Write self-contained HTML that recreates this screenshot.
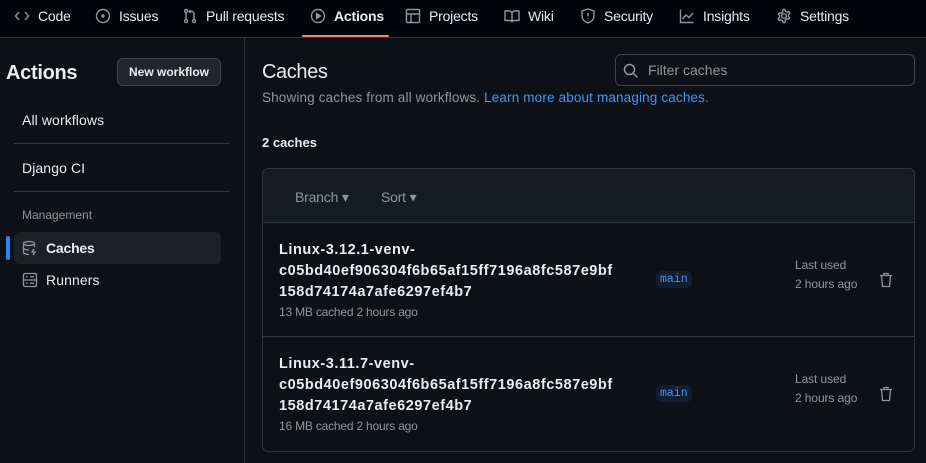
<!DOCTYPE html>
<html><head><style>
*{box-sizing:border-box;margin:0;padding:0}
body{width:926px;height:463px;overflow:hidden;background:#0d1117;color:#e6edf3;font-family:"Liberation Sans",sans-serif;font-size:14px;position:relative}
.nav{position:absolute;left:0;top:0;width:926px;height:38px;background:#010409;border-bottom:1px solid #30363d}
.nav .it{position:absolute;top:6px;height:20px;display:flex;align-items:center;gap:8px;font-size:14px;color:#e6edf3;letter-spacing:-0.2px}
.nav svg{width:16px;height:16px;fill:none;stroke:#8d96a0;stroke-width:1.4}
.ul{position:absolute;left:302px;top:35px;width:87px;height:2px;background:#f78166;border-radius:2px}
.side{position:absolute;left:0;top:38px;width:245px;height:425px;border-right:1px solid #30363d}
.abs{position:absolute}
.btn{left:117px;top:58px;width:104px;height:28px;border:1px solid #3d444d;background:#21262d;border-radius:6px;font-size:12px;font-weight:bold;color:#e6edf3;display:flex;align-items:center;justify-content:center}
.sep{height:1px;background:#30363d}
.muted{color:#8d96a0}
.box{left:262px;top:168px;width:653px;height:284px;border:1px solid #30363d;border-radius:6px;overflow:hidden}
.bh{height:54px;background:#161b22;border-bottom:1px solid #30363d;position:relative}
.row{position:relative;height:114px;border-bottom:1px solid #30363d}
.t{position:absolute;left:16px;top:17px;font-weight:bold;font-size:14.5px;line-height:21px;letter-spacing:0.55px}
.s{position:absolute;left:16px;top:82px;font-size:12px;color:#8d96a0;letter-spacing:-0.2px}
.br{position:absolute;left:393px;top:48px;background:#121d2f;color:#4493f8;font-family:"Liberation Mono",monospace;font-size:11.5px;padding:2px 4px;border-radius:6px}
.lu{position:absolute;left:532px;top:33px;font-size:12px;color:#8d96a0;line-height:19px;letter-spacing:-0.1px}
.tr{position:absolute;left:616px;top:49px}
</style></head><body>
<div class="nav">
<div class="it" style="left:14px"><svg viewBox="0 0 16 16"><path d="M5 4L1.5 8 5 12M11 4l3.5 4L11 12"/></svg>Code</div>
<div class="it" style="left:95px"><svg viewBox="0 0 16 16"><circle cx="8" cy="8" r="6.5"/><circle cx="8" cy="8" r="1" fill="#8d96a0"/></svg>Issues</div>
<div class="it" style="left:182px"><svg viewBox="0 0 16 16"><circle cx="4" cy="3" r="1.5"/><circle cx="4" cy="13" r="1.5"/><circle cx="12" cy="13" r="1.5"/><path d="M4 4.5v7M12 11.5V5.5a2 2 0 0 0-2-2H7M8.5 2L7 3.5 8.5 5"/></svg>Pull requests</div>
<div class="it" style="left:310px;font-weight:bold"><svg viewBox="0 0 16 16"><circle cx="8" cy="8" r="6.5"/><path d="M6.5 5.5v5l4-2.5z" fill="#8d96a0"/></svg>Actions</div>
<div class="it" style="left:405px"><svg viewBox="0 0 16 16"><rect x="1.5" y="1.5" width="13" height="13" rx="1"/><path d="M1.5 6h13M6 6v8.5"/></svg>Projects</div>
<div class="it" style="left:504px"><svg viewBox="0 0 16 16"><path d="M1 3h4.5A2.5 2.5 0 0 1 8 5.5V14a2 2 0 0 0-2-1.5H1zM15 3h-4.5A2.5 2.5 0 0 0 8 5.5V14a2 2 0 0 1 2-1.5h5z"/></svg>Wiki</div>
<div class="it" style="left:580px"><svg viewBox="0 0 16 16"><path d="M8 1l6 2v5c0 3.5-3 6-6 7-3-1-6-3.5-6-7V3z"/><path d="M8 5v3.5M8 10.5v.5"/></svg>Security</div>
<div class="it" style="left:679px"><svg viewBox="0 0 16 16"><path d="M1.5 1.5v13h13M3.5 11l3.5-4 3 2.5L14 5"/></svg>Insights</div>
<div class="it" style="left:776px"><svg viewBox="0 0 16 16"><circle cx="8" cy="8" r="2.3"/><path d="M7 1.5h2l.4 1.8 1.6.9 1.7-.6 1 1.7-1.3 1.3v1.8l1.3 1.3-1 1.7-1.7-.6-1.6.9L9 14.5H7l-.4-1.8-1.6-.9-1.7.6-1-1.7L3.6 9.4V7.6L2.3 6.3l1-1.7 1.7.6 1.6-.9z"/></svg>Settings</div>
<div class="ul"></div>
</div>
<div class="side"></div>
<div class="abs" style="left:6px;top:62px;font-size:20px;font-weight:bold;letter-spacing:-0.3px">Actions</div>
<div class="abs btn">New workflow</div>
<div class="abs" style="left:22px;top:112px;letter-spacing:0.1px">All workflows</div>
<div class="abs sep" style="left:14px;top:143px;width:215px"></div>
<div class="abs" style="left:22px;top:160px;letter-spacing:0.1px">Django CI</div>
<div class="abs sep" style="left:14px;top:191px;width:215px"></div>
<div class="abs muted" style="left:22px;top:208px;font-size:12px">Management</div>
<div class="abs" style="left:14px;top:232px;width:207px;height:32px;background:#1c2128;border-radius:6px"></div>
<div class="abs" style="left:6px;top:236px;width:4px;height:24px;background:#2f81f7;border-radius:2px"></div>
<svg class="abs" style="left:22px;top:240px" width="16" height="16" viewBox="0 0 16 16" fill="none" stroke="#8d96a0" stroke-width="1.3"><ellipse cx="7" cy="3.5" rx="5.5" ry="2"/><path d="M1.5 3.5v9c0 1.1 2.5 2 5.5 2M12.5 3.5V7M1.5 8c0 1.1 2.5 2 5.5 2"/><path d="M12 9l-2 3h3l-2 3" /></svg>
<div class="abs" style="left:46px;top:240px;font-weight:bold;letter-spacing:-0.2px">Caches</div>
<svg class="abs" style="left:22px;top:272px" width="16" height="16" viewBox="0 0 16 16" fill="none" stroke="#8d96a0" stroke-width="1.3"><rect x="1.5" y="1.5" width="13" height="13" rx="1.5"/><path d="M1.5 8h13M4 4.7h1.5M4 11.2h1.5M8 4.7h4M8 11.2h4"/></svg>
<div class="abs" style="left:46px;top:272px;letter-spacing:0.1px">Runners</div>

<div class="abs" style="left:262px;top:61px;font-size:20px;letter-spacing:-0.4px">Caches</div>
<div class="abs muted" style="left:262px;top:90px;font-size:13.5px;letter-spacing:0.15px">Showing caches from all workflows. <span style="color:#4493f8">Learn more about managing caches.</span></div>
<div class="abs" style="left:615px;top:54px;width:300px;height:32px;border:1px solid #3d444d;border-radius:6px;background:#0d1117"></div>
<svg class="abs" style="left:623px;top:63px" width="16" height="16" viewBox="0 0 16 16" fill="none" stroke="#8d96a0" stroke-width="1.5"><circle cx="6.5" cy="6.5" r="5"/><path d="M10.2 10.2L14.5 14.5"/></svg>
<div class="abs muted" style="left:648px;top:62px;letter-spacing:0px">Filter caches</div>
<div class="abs" style="left:262px;top:135px;font-weight:bold;font-size:13px">2 caches</div>
<div class="abs box">
<div class="bh"><span class="abs muted" style="left:32px;top:20px;letter-spacing:-0.2px">Branch ▾</span><span class="abs muted" style="left:118px;top:20px;letter-spacing:-0.2px">Sort ▾</span></div>
<div class="row"><div class="t">Linux-3.12.1-venv-<br>c05bd40ef906304f6b65af15ff7196a8fc587e9bf<br>158d74174a7afe6297ef4b7</div><div class="s">13 MB cached 2 hours ago</div><span class="br">main</span><div class="lu">Last used<br>2 hours ago</div>
<svg class="tr" width="14" height="16" viewBox="0 0 14 16" fill="none" stroke="#8d96a0" stroke-width="1.3"><path d="M1 3.5h12M5 3.5V1.5h4v2M2.5 3.5l1 11h7l1-11"/></svg></div>
<div class="row" style="border:0"><div class="t">Linux-3.11.7-venv-<br>c05bd40ef906304f6b65af15ff7196a8fc587e9bf<br>158d74174a7afe6297ef4b7</div><div class="s">16 MB cached 2 hours ago</div><span class="br">main</span><div class="lu">Last used<br>2 hours ago</div>
<svg class="tr" width="14" height="16" viewBox="0 0 14 16" fill="none" stroke="#8d96a0" stroke-width="1.3"><path d="M1 3.5h12M5 3.5V1.5h4v2M2.5 3.5l1 11h7l1-11"/></svg></div>
</div>
</body></html>
